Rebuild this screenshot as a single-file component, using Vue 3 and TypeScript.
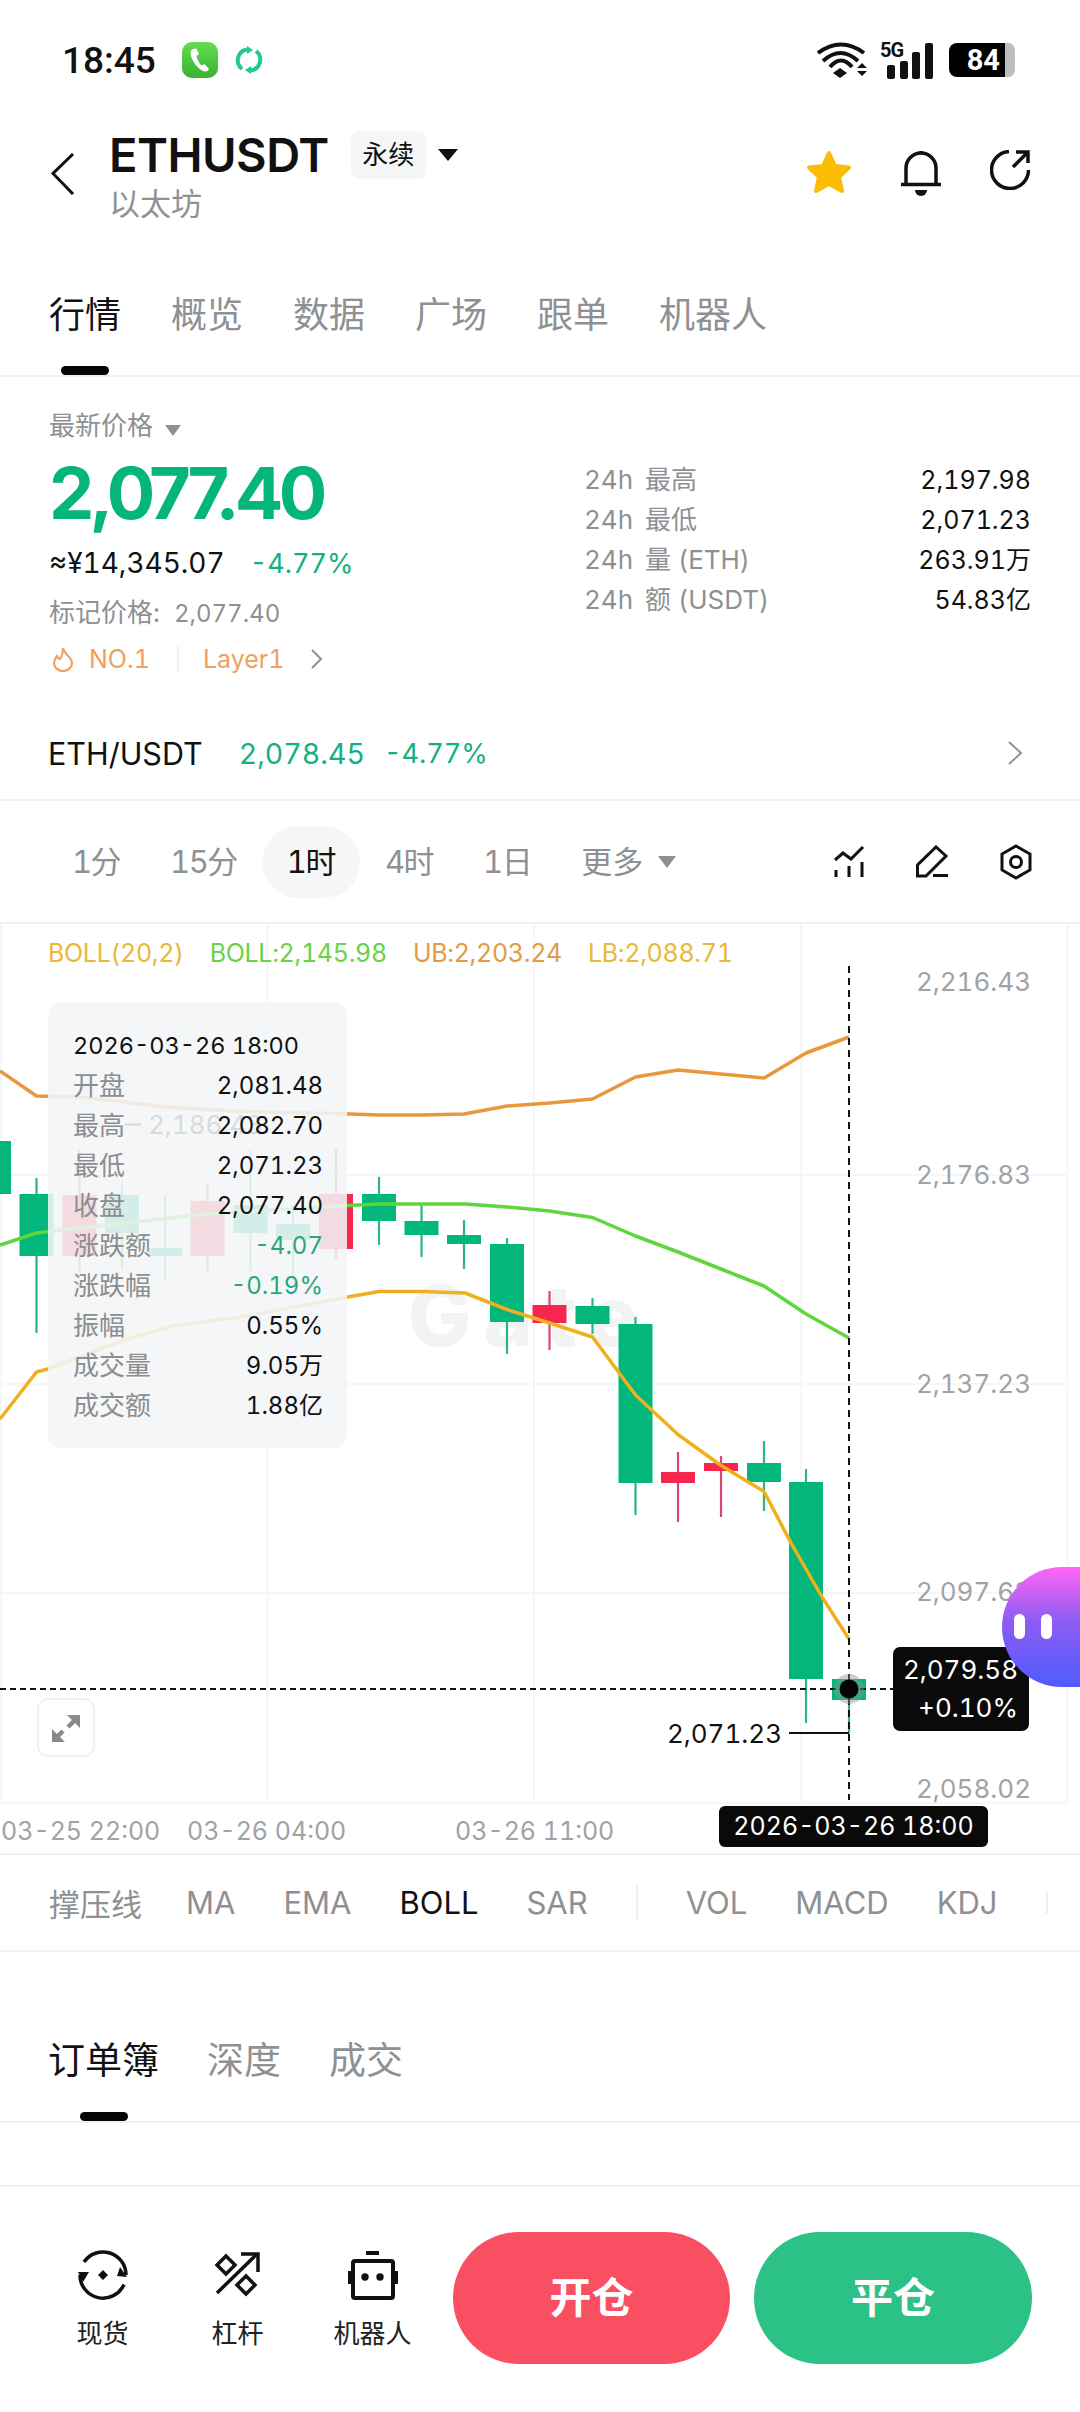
<template>
  <div class="page">
    <!-- 状态栏 -->
    <div class="status">
      <span class="clock">18:45</span>
      <span class="app-phone">
        <svg width="24" height="26" viewBox="0 0 24 26"><path d="M5 2 C3 3 2 5 3 9 C5 15 9 21 15 24 C18 25 20 24 21 22 L16.500 17 L13.500 18.500 C11 16 9 12 8.500 9 L11 7 L8.500 1.500 Z" fill="#fff" /></svg>
      </span>
      <svg class="app-sync" width="30" height="28" viewBox="0 0 30 28" fill="none" stroke="#1fc99a" stroke-width="4">
        <path d="M8 23 A11 11 0 0 1 13 3.500" />
        <path d="M22 5 A11 11 0 0 1 17 24.500" />
        <path d="M13 0 L19 4 L13 8 Z M17 20 L11 24 L17 28 Z" fill="#1fc99a" stroke="none" />
      </svg>
      <div class="status-right">
        <svg width="52" height="38" viewBox="0 0 52 38" fill="none" stroke="#111" stroke-width="4">
          <path d="M2 12 Q25 -5 48 12" />
          <path d="M7 20 Q24.500 4 42 20" />
          <path d="M14 26 Q25 13 36 26" />
          <path d="M24 27 L31 32 L24 37 L17 32 Z" fill="#111" stroke="none" />
          <path d="M41 27 L46 22 L51 27 Z M41 30 L51 30 L46 35 Z" fill="#111" stroke="none" />
        </svg>
        <div class="signal">
          <span class="five-g">5G</span>
          <i v-for="bar in signalBars" :key="bar" class="bar" :style="{ height: bar + 'px' }"></i>
        </div>
        <div class="battery"><span class="battery-fill">84</span><span class="battery-rest"></span></div>
      </div>
    </div>

    <!-- 顶部标题 -->
    <div class="header">
      <svg class="back" width="24" height="42" viewBox="0 0 24 42" fill="none" stroke="#111" stroke-width="3"><path d="M22 1 L2 20.500 L22 41" /></svg>
      <div class="title-block">
        <div class="title-row">
          <span class="symbol">ETHUSDT</span>
          <span class="perp">永续</span>
          <i class="tri tri-title"></i>
        </div>
        <div class="sub-name">以太坊</div>
      </div>
      <div class="header-icons">
        <svg width="46" height="44" viewBox="0 0 46 44"><path d="M23 3 L29 16 L43 17.500 L33 27 L36 41 L23 34 L10 41 L13 27 L3 17.500 L17 16 Z" fill="#fbbc05" stroke="#fbbc05" stroke-width="4" stroke-linejoin="round" /></svg>
        <svg width="42" height="46" viewBox="0 0 42 46" fill="none" stroke="#111" stroke-width="3.500">
          <path d="M6 34 V18 A15 15 0 0 1 36 18 V34" />
          <path d="M1 34.500 H41" />
          <path d="M21 1 V4" />
          <path d="M15 40 H27 A6 6 0 0 1 15 40 Z" fill="#111" stroke="none" />
        </svg>
        <svg width="41" height="40" viewBox="0 0 41 40" fill="none" stroke="#111" stroke-width="3.500">
          <path d="M19 1.500 A18.500 18.500 0 1 0 38.500 20" />
          <path d="M23 17 L37 3" />
          <path d="M26 2 H38 V13" />
        </svg>
      </div>
    </div>

    <!-- 主标签 -->
    <div class="tabs main-tabs">
      <span v-for="(tab, i) in mainTabs" :key="tab" class="tab" :class="{ active: i === 0 }">{{ tab }}</span>
    </div>

    <!-- 价格信息 -->
    <div class="stats">
      <div class="stats-left">
        <div class="price-label">最新价格<i class="tri tri-small"></i></div>
        <div class="price">2,077.40</div>
        <div class="price-sub">≈¥14,345.07<span class="green pct">-4.77%</span></div>
        <div class="mark">标记价格: <span class="mark-value">2,077.40</span></div>
        <div class="chips">
          <svg width="22" height="25" viewBox="0 0 22 25" fill="none" stroke="#f2a263" stroke-width="2.200"><path d="M11 1 C12 7 20 10 20 16 A9 8 0 0 1 2 16 C2 13 3.500 11 5 9 C6 11 7 12 8 12 C10 9 11 5 11 1 Z" /></svg>
          <span class="chip-no">NO.1</span>
          <i class="chip-sep"></i>
          <span>Layer1</span>
          <svg class="chip-arrow" width="13" height="20" viewBox="0 0 13 20" fill="none" stroke="#8e9093" stroke-width="2"><path d="M2 1 L11 10 L2 19" /></svg>
        </div>
      </div>
      <div class="stats-right">
        <div v-for="row in dayStats" :key="row.label" class="stat-row">
          <span class="stat-h">24h</span>
          <span class="stat-label">{{ row.label }}</span>
          <span class="stat-value">{{ row.value }}</span>
        </div>
      </div>
    </div>

    <!-- 现货行 -->
    <div class="pair">
      <span class="pair-name">ETH/USDT</span>
      <span class="green pair-price">2,078.45</span>
      <span class="green pair-pct">-4.77%</span>
      <svg class="pair-arrow" width="17" height="24" viewBox="0 0 17 24" fill="none" stroke="#8e9093" stroke-width="2"><path d="M2 1 L14 12 L2 23" /></svg>
    </div>

    <!-- 周期 -->
    <div class="periods">
      <span v-for="p in periods" :key="p" class="period" :class="{ active: p === '1时' }">{{ p }}</span>
      <span class="period more">更多<i class="tri tri-more"></i></span>
      <div class="period-icons">
        <svg width="32" height="32" viewBox="0 0 32 32" fill="none" stroke="#111" stroke-width="3">
          <path d="M2 14 L10 7 L18 13 L30 1" />
          <path d="M3 24 V31 M16 20 V31 M29 16 V31" />
        </svg>
        <svg width="33" height="33" viewBox="0 0 33 33" fill="none" stroke="#111" stroke-width="3">
          <path d="M1.500 31 V20 L20 2 L30 11 L10 31 Z" />
          <path d="M17 30.500 H32" />
        </svg>
        <svg width="32" height="36" viewBox="0 0 32 36" fill="none" stroke="#111" stroke-width="3">
          <path d="M16 2 L30 10 V26 L16 34 L2 26 V10 Z" />
          <circle cx="16" cy="18" r="5.500" />
        </svg>
      </div>
    </div>

    <!-- K线图 -->
    <div class="chart">
      <svg class="chart-svg" width="1080" height="929" viewBox="0 924 1080 929">
        <g stroke="#f5f6f7" stroke-width="2">
          <path v-for="y in gridY" :key="y" :d="`M0 ${y} H1067`" />
          <path v-for="x in gridX" :key="x" :d="`M${x} 924 V1803`" />
        </g>
        <text class="watermark" x="408" y="1346">Gate</text>

        <g v-for="c in candles" :key="c.x">
          <path :d="`M${c.x} ${c.hi} V${c.lo}`" :stroke="c.up ? upWick : downWick" stroke-width="2.200" />
          <rect :x="c.x - 17" :y="c.top" width="34" :height="c.bottom - c.top" :fill="c.up ? upColor : downColor" />
        </g>

        <polyline :points="ubLine" fill="none" stroke="#e8983a" stroke-width="3.500" stroke-linejoin="round" />
        <polyline :points="midLine" fill="none" stroke="#5fd63c" stroke-width="3.500" stroke-linejoin="round" />
        <polyline :points="lbLine" fill="none" stroke="#efb01e" stroke-width="3.500" stroke-linejoin="round" />

        <text class="axis-hi" x="148" y="1134">2,186.43</text>
        <path d="M124 1124.500 H141" stroke="#111" stroke-width="2" />

        <text v-for="t in yLabels" :key="t.text" class="axis" x="1031" :y="t.y" text-anchor="end">{{ t.text }}</text>
        <text v-for="t in xLabels" :key="t.text" class="axis axis-x" :x="t.x" y="1840">{{ t.text }}</text>

        <path d="M849 966 V1800" stroke="#111" stroke-width="2" stroke-dasharray="7 5" />
        <path d="M0 1689 H893" stroke="#111" stroke-width="2" stroke-dasharray="6 4" />
        <circle cx="849" cy="1689" r="15" fill="#8f9497" fill-opacity=".45" />
        <circle cx="849" cy="1689" r="9.500" fill="#050505" />

        <text class="low-label" x="782" y="1743" text-anchor="end">2,071.23</text>
        <path d="M789 1733 H849" stroke="#111" stroke-width="2" />
      </svg>

      <div class="legend">
        <span class="yellow">BOLL(20,2)</span>
        <span class="lime">BOLL:2,145.98</span>
        <span class="orange">UB:2,203.24</span>
        <span class="yellow">LB:2,088.71</span>
      </div>

      <div class="tooltip">
        <div class="tip-time">2026-03-26 18:00</div>
        <div v-for="row in tipRows" :key="row.label" class="tip-row">
          <span class="tip-label">{{ row.label }}</span>
          <span :class="{ 'tip-green': row.green }">{{ row.value }}</span>
        </div>
      </div>

      <div class="expand">
        <svg width="58" height="58" viewBox="0 0 58 58" fill="#8a8a8a" stroke="none">
          <path d="M30 17 H43 V30 Z M15 31 V44 H28 Z" />
          <path d="M38 22 L31 29 M20 39 L26 33" stroke="#8a8a8a" stroke-width="4.500" />
        </svg>
      </div>

      <div class="price-tag">
        <div>2,079.58</div>
        <div>+0.10%</div>
      </div>
      <div class="time-tag">2026-03-26 18:00</div>
      <div class="bubble"><i></i><i></i></div>
    </div>

    <!-- 指标 -->
    <div class="indicators">
      <span v-for="name in mainIndicators" :key="name" :class="{ active: name === 'BOLL' }">{{ name }}</span>
      <i class="ind-sep"></i>
      <span v-for="name in subIndicators" :key="name">{{ name }}</span>
      <i class="ind-sep short"></i>
    </div>

    <!-- 订单簿 -->
    <div class="tabs book-tabs">
      <span v-for="(tab, i) in bookTabs" :key="tab" class="tab" :class="{ active: i === 0 }">{{ tab }}</span>
    </div>
    <div class="book-empty"></div>

    <!-- 底部操作 -->
    <div class="bottom">
      <div class="tool">
        <svg width="50" height="50" viewBox="0 0 50 50" fill="none" stroke="#111" stroke-width="3.500">
          <path d="M6 12 A23 23 0 0 1 48 25" />
          <path d="M2 25 A23 23 0 0 0 46 34.500" />
          <path d="M42 17 L49 27 L39 26 Z M0 22 L11 22 L5 32 Z M25 20 L30 25 L25 30 L20 25 Z" fill="#111" stroke="none" />
        </svg>
        <span>现货</span>
      </div>
      <div class="tool">
        <svg width="50" height="50" viewBox="-2 -2 50 50" fill="none" stroke="#111" stroke-width="3.500">
          <path d="M2 41 L42 2" />
          <path d="M26 2 H43 V20" />
          <path d="M11 4 L20 13 L11 22 L2 13 Z" />
          <path d="M31 24 L40 33 L31 42 L22 33 Z" />
        </svg>
        <span>杠杆</span>
      </div>
      <div class="tool">
        <svg width="50" height="50" viewBox="0 0 50 50" fill="none" stroke="#111" stroke-width="4">
          <rect x="5" y="11" width="40" height="37" rx="2" />
          <path d="M18 3 H31" />
          <path d="M0 21 H3 V34 H0 Z M47 21 H50 V34 H47 Z" fill="#111" stroke="none" />
          <circle cx="17" cy="27" r="3.700" fill="#111" stroke="none" />
          <circle cx="32" cy="27" r="3.700" fill="#111" stroke="none" />
        </svg>
        <span>机器人</span>
      </div>
      <div class="btn btn-open">开仓</div>
      <div class="btn btn-close">平仓</div>
    </div>
  </div>
</template>

<script setup lang="ts">
interface Candle {
  x: number
  hi: number
  lo: number
  top: number
  bottom: number
  up: boolean
}

const upColor = '#f7264f'
const downColor = '#03b67b'
const upWick = '#d9476a'
const downWick = '#2bb38c'

const signalBars = [14, 18, 27, 36]
const mainTabs = ['行情', '概览', '数据', '广场', '跟单', '机器人']
const bookTabs = ['订单簿', '深度', '成交']
const periods = ['1分', '15分', '1时', '4时', '1日']
const mainIndicators = ['撑压线', 'MA', 'EMA', 'BOLL', 'SAR']
const subIndicators = ['VOL', 'MACD', 'KDJ']

const dayStats = [
  { label: '最高', value: '2,197.98' },
  { label: '最低', value: '2,071.23' },
  { label: '量 (ETH)', value: '263.91万' },
  { label: '额 (USDT)', value: '54.83亿' }
]

const tipRows = [
  { label: '开盘', value: '2,081.48' },
  { label: '最高', value: '2,082.70' },
  { label: '最低', value: '2,071.23' },
  { label: '收盘', value: '2,077.40' },
  { label: '涨跌额', value: '-4.07', green: true },
  { label: '涨跌幅', value: '-0.19%', green: true },
  { label: '振幅', value: '0.55%' },
  { label: '成交量', value: '9.05万' },
  { label: '成交额', value: '1.88亿' }
]

const gridY = [1175, 1384, 1593, 1803]
const gridX = [1, 267.500, 534, 801, 1067.500]

const yLabels = [
  { text: '2,216.43', y: 991 },
  { text: '2,176.83', y: 1184 },
  { text: '2,137.23', y: 1393 },
  { text: '2,097.63', y: 1601 },
  { text: '2,058.02', y: 1798 }
]

const xLabels = [
  { text: '03-25 22:00', x: 1 },
  { text: '03-26 04:00', x: 187 },
  { text: '03-26 11:00', x: 455 }
]

// x 中心、上影、下影、实体上、实体下、是否上涨
const rawCandles: [number, number, number, number, number, boolean][] = [
  [-6, 1120, 1230, 1141, 1194, false],
  [36.500, 1178, 1333, 1194, 1256, false],
  [79.500, 1150, 1271, 1195, 1256, true],
  [122, 1183, 1269, 1195, 1233, false],
  [165, 1195, 1280, 1248, 1256, false],
  [207.500, 1183, 1271, 1201, 1256, true],
  [250.500, 1150, 1271, 1205, 1233, false],
  [293, 1205, 1280, 1224, 1240, false],
  [336, 1148, 1260, 1194, 1249, true],
  [379, 1177, 1245, 1194, 1221, false],
  [421.500, 1204, 1257, 1221, 1235, false],
  [464, 1220, 1269, 1235, 1244, false],
  [507, 1238, 1354, 1244, 1322, false],
  [549.500, 1291, 1350, 1305, 1323, true],
  [592.500, 1298, 1334, 1306, 1324, false],
  [635.500, 1317, 1515, 1324, 1483, false],
  [678, 1452, 1522, 1472, 1483, true],
  [721, 1456, 1517, 1463, 1471, true],
  [764, 1441, 1511, 1463, 1482, false],
  [806, 1469, 1723, 1482, 1679, false],
  [849, 1679, 1733, 1679, 1700, false]
]

const candles: Candle[] = rawCandles.map(([x, hi, lo, top, bottom, up]) => ({ x, hi, lo, top, bottom, up }))

const ubLine = '0,1071 36.5,1096 79.5,1097 165,1107 250,1112 336,1113.5 379,1115 421.5,1115 464,1114 507,1106 549.5,1103 592.5,1099 635.5,1077 678,1070 721,1074 764,1078 806,1053 849,1037'
const midLine = '0,1245 36.5,1233 124,1223 207,1214 348,1205.5 379,1204 421.5,1204 465,1204 507,1207 549.5,1211 592.5,1217.5 635.5,1236 678,1252 721,1269 764,1286 806,1314 849,1338'
const lbLine = '0,1419 36.5,1372 48,1369 124,1340 172,1326 241,1317 348,1297 379,1291.5 421.5,1291.5 465,1293 507,1309.5 549.5,1323 592.5,1337 635.5,1395 678,1434.5 721,1465.5 764,1491.5 791,1543 822,1597 849,1639'
</script>

<style scoped>
.page {
  width: 1080px;
  height: 2412px;
  overflow: hidden;
  background: #fff;
  color: #111;
  font-family: Inter, "Noto Sans CJK SC", sans-serif;
  font-variant-numeric: tabular-nums;
}

i {
  display: block;
  font-style: normal;
}

.green {
  color: #14b082;
}

.tri {
  width: 0;
  height: 0;
  border-style: solid;
  border-color: transparent;
}

/* 状态栏 */
.status {
  height: 120px;
  display: flex;
  align-items: center;
  padding: 0 65px 0 62px;
}

.clock {
  font: 500 37px Roboto, sans-serif;
  margin-right: 26px;
}

.app-phone {
  width: 36px;
  height: 36px;
  border-radius: 10px;
  background: linear-gradient(#66dc4e, #38b331);
  display: flex;
  align-items: center;
  justify-content: center;
  margin-right: 16px;
}

.status-right {
  margin-left: auto;
  display: flex;
  align-items: center;
}

.signal {
  position: relative;
  width: 46px;
  height: 37px;
  margin-left: 19px;
  display: flex;
  align-items: flex-end;
  justify-content: space-between;
}

.five-g {
  position: absolute;
  left: -7px;
  top: -2px;
  font: 700 20px/20px Roboto, sans-serif;
  letter-spacing: -1px;
}

.bar {
  width: 8px;
  background: #111;
  border-radius: 2px;
}

.battery {
  width: 66px;
  height: 34px;
  margin-left: 16px;
  display: flex;
}

.battery-fill {
  width: 56px;
  background: #000;
  border-radius: 8px 0 0 8px;
  color: #fff;
  font: 700 29px/34px Roboto, sans-serif;
  text-align: right;
  padding-right: 5px;
  box-sizing: border-box;
}

.battery-rest {
  width: 10px;
  background: #bdbdbd;
  border-radius: 0 7px 7px 0;
}

/* 标题 */
.header {
  height: 120px;
  display: flex;
  align-items: flex-start;
  padding: 11px 49px 0 51px;
  box-sizing: border-box;
}

.back {
  margin-top: 22px;
  margin-right: 34px;
}

.title-row {
  display: flex;
  align-items: center;
  height: 48px;
}

.symbol {
  font-size: 47px;
  font-weight: 600;
  letter-spacing: -0.5px;
  line-height: 48px;
}

.perp {
  margin-left: 22px;
  width: 75px;
  height: 48px;
  line-height: 48px;
  text-align: center;
  background: #f6f6f7;
  border-radius: 8px;
  font-size: 26px;
}

.tri-title {
  margin-left: 12px;
  border-width: 12px 10px 0;
  border-top-color: #111;
}

.sub-name {
  margin-top: 5px;
  font-size: 31px;
  line-height: 40px;
  color: #8f9194;
}

.header-icons {
  margin-left: auto;
  margin-top: 19px;
  display: flex;
  align-items: flex-start;
  gap: 48px;
}

/* 标签 */
.tabs {
  display: flex;
  gap: 50px;
  padding-left: 49px;
  border-bottom: 2px solid #f1f1f2;
  box-sizing: border-box;
}

.main-tabs {
  height: 137px;
  padding-top: 55px;
}

.book-tabs {
  height: 171px;
  padding-top: 89px;
  padding-left: 48px;
  gap: 48px;
}

.tab {
  position: relative;
  font-size: 36px;
  line-height: 40px;
  color: #8e9093;
}

.book-tabs .tab {
  font-size: 37px;
}

.tab.active {
  color: #111;
}

.tab.active::after {
  content: "";
  position: absolute;
  left: 50%;
  bottom: 0;
  width: 48px;
  height: 9px;
  margin-left: -24px;
  background: #050505;
  border-radius: 5px;
}

/* 价格 */
.stats {
  height: 330px;
  display: flex;
  justify-content: space-between;
  padding: 31px 49px 0;
  box-sizing: border-box;
}

.price-label {
  display: flex;
  align-items: center;
  font-size: 26px;
  line-height: 36px;
  color: #8e9093;
}

.tri-small {
  margin-left: 12px;
  margin-top: 8px;
  border-width: 11px 8px 0;
  border-top-color: #8e9093;
}

.price {
  margin-top: 9px;
  font-size: 72px;
  line-height: 80px;
  font-weight: 700;
  font-variant-numeric: normal;
  letter-spacing: -4.800px;
  color: #05b57c;
}

.price-sub {
  margin-top: 10px;
  font-size: 28px;
  line-height: 40px;
}

.pct {
  margin-left: 25px;
  font-size: 27px;
}

.mark {
  margin-top: 11px;
  font-size: 26px;
  line-height: 36px;
  color: #8e9093;
}

.mark-value {
  margin-left: 7px;
  font-size: 24px;
}

.chips {
  margin-top: 9px;
  display: flex;
  align-items: center;
  font-size: 25px;
  line-height: 36px;
  color: #f0a060;
  padding-left: 3px;
}

.chip-no {
  margin-left: 15px;
}

.chip-sep {
  width: 2px;
  height: 27px;
  margin: 0 24px 0 27px;
  background: #f1f1f2;
}

.chip-arrow {
  margin-left: 26px;
}

.stats-right {
  width: 447px;
  margin-top: 52px;
}

.stat-row {
  display: flex;
  font-size: 26px;
  line-height: 40px;
  color: #8e9093;
}

.stat-h {
  width: 61px;
}

.stat-value {
  margin-left: auto;
  font-size: 25px;
  color: #111;
}

/* 现货行 */
.pair {
  height: 94px;
  display: flex;
  align-items: center;
  padding: 0 56px 0 48px;
  border-bottom: 2px solid #f1f1f2;
  box-sizing: border-box;
  font-size: 30.500px;
}

.pair-price {
  margin-left: 36px;
  font-size: 28.500px;
}

.pair-pct {
  margin-left: 19px;
  font-size: 27px;
}

.pair-arrow {
  margin-left: auto;
}

/* 周期 */
.periods {
  height: 123px;
  display: flex;
  align-items: center;
  padding: 0 48px 0 47px;
  border-bottom: 2px solid #f1f1f2;
  box-sizing: border-box;
}

.period {
  height: 72px;
  line-height: 72px;
  padding: 0 25px;
  border-radius: 36px;
  font-size: 31px;
  letter-spacing: -1.500px;
  color: #8e9093;
}

.period.active {
  background: #f6f6f7;
  color: #111;
}

.more {
  display: flex;
  align-items: center;
  letter-spacing: 0;
  padding-right: 0;
}

.tri-more {
  margin-left: 15px;
  border-width: 12px 9px 0;
  border-top-color: #8e9093;
}

.period-icons {
  margin-left: auto;
  display: flex;
  align-items: center;
  gap: 51px;
}

/* 图表 */
.chart {
  position: relative;
  height: 931px;
  border-bottom: 2px solid #f1f1f2;
  box-sizing: border-box;
  overflow: hidden;
}

.chart-svg {
  display: block;
}

.chart-svg text {
  font-family: Inter, sans-serif;
}

.chart-svg .watermark {
  font-size: 84px;
  font-weight: 800;
  letter-spacing: 12px;
  fill: #f2f3f4;
}

.chart-svg .axis {
  font-size: 26px;
  fill: #a0a2a5;
}

.chart-svg .axis-x {
  font-size: 25px;
}

.chart-svg .axis-hi,
.chart-svg .low-label {
  font-size: 26px;
  fill: #111;
}

.legend {
  position: absolute;
  left: 48px;
  top: 14px;
  display: flex;
  gap: 26px;
  font-size: 25px;
  letter-spacing: -0.300px;
  line-height: 30px;
}

.yellow {
  color: #e9b838;
}

.lime {
  color: #67d24a;
}

.orange {
  color: #e39a45;
}

.tooltip {
  position: absolute;
  left: 48px;
  top: 78px;
  width: 299px;
  height: 446px;
  padding: 24px 24px 0 25px;
  box-sizing: border-box;
  background: rgba(243, 245, 247, 0.88);
  border-radius: 14px;
  font-size: 24px;
  line-height: 40px;
}

.tip-time {
  font-size: 23.500px;
}

.tip-row {
  display: flex;
  justify-content: space-between;
}

.tip-label {
  font-size: 26px;
  color: #8b8d8f;
}

.tip-green {
  color: #2ba67e;
}

.expand {
  position: absolute;
  left: 37px;
  top: 774px;
  width: 58px;
  height: 59px;
  box-sizing: border-box;
  border: 2px solid #f1f1f2;
  border-radius: 11px;
}

.expand svg {
  display: block;
  margin: -2px;
}

.price-tag {
  position: absolute;
  left: 893px;
  top: 723px;
  width: 136px;
  height: 84px;
  padding: 4px 11px 0 0;
  box-sizing: border-box;
  background: #0a0a0a;
  border-radius: 7px;
  color: #fff;
  font-size: 26px;
  line-height: 38px;
  text-align: right;
}

.time-tag {
  position: absolute;
  left: 719px;
  top: 882px;
  width: 269px;
  height: 41px;
  background: #0a0a0a;
  border-radius: 6px;
  color: #fff;
  font-size: 25px;
  line-height: 41px;
  text-align: center;
}

.bubble {
  position: absolute;
  left: 1002px;
  top: 643px;
  width: 78px;
  height: 120px;
  border-radius: 60px 0 0 60px;
  background: linear-gradient(#ff66f5, #8d5cf2 45%, #4f5cff);
  display: flex;
  align-items: center;
  gap: 16px;
  padding-left: 12px;
  box-sizing: border-box;
}

.bubble i {
  width: 11px;
  height: 25px;
  margin-top: -1px;
  border-radius: 6px;
  background: #fff;
}

/* 指标 */
.indicators {
  height: 97px;
  display: flex;
  align-items: center;
  gap: 48px;
  padding-left: 49px;
  border-bottom: 2px solid #f1f1f2;
  box-sizing: border-box;
  font-size: 31px;
  color: #8e9093;
}

.indicators span:first-child {
  margin-right: -4px;
}

.indicators .active {
  color: #111;
}

.ind-sep {
  width: 2px;
  height: 35px;
  background: #f1f1f2;
}

.ind-sep.short {
  height: 23px;
}

.book-empty {
  height: 64px;
  border-bottom: 2px solid #f1f1f2;
  box-sizing: border-box;
}

/* 底部 */
.bottom {
  display: flex;
  align-items: flex-start;
  padding: 45px 48px 0 35px;
}

.tool {
  width: 135px;
  padding-top: 18px;
  display: flex;
  flex-direction: column;
  align-items: center;
  font-size: 26px;
  line-height: 36px;
  color: #222;
}

.tool svg {
  display: block;
  margin-bottom: 16px;
}

.btn {
  height: 132px;
  border-radius: 66px;
  color: #fff;
  font-size: 42px;
  font-weight: 700;
  line-height: 132px;
  text-align: center;
}

.btn-open {
  width: 277px;
  margin-left: 13px;
  background: #f94f63;
}

.btn-close {
  width: 278px;
  margin-left: 24px;
  background: #2cc187;
}
</style>

<style>
html,
body {
  margin: 0;
  background: #fff;
}
</style>
